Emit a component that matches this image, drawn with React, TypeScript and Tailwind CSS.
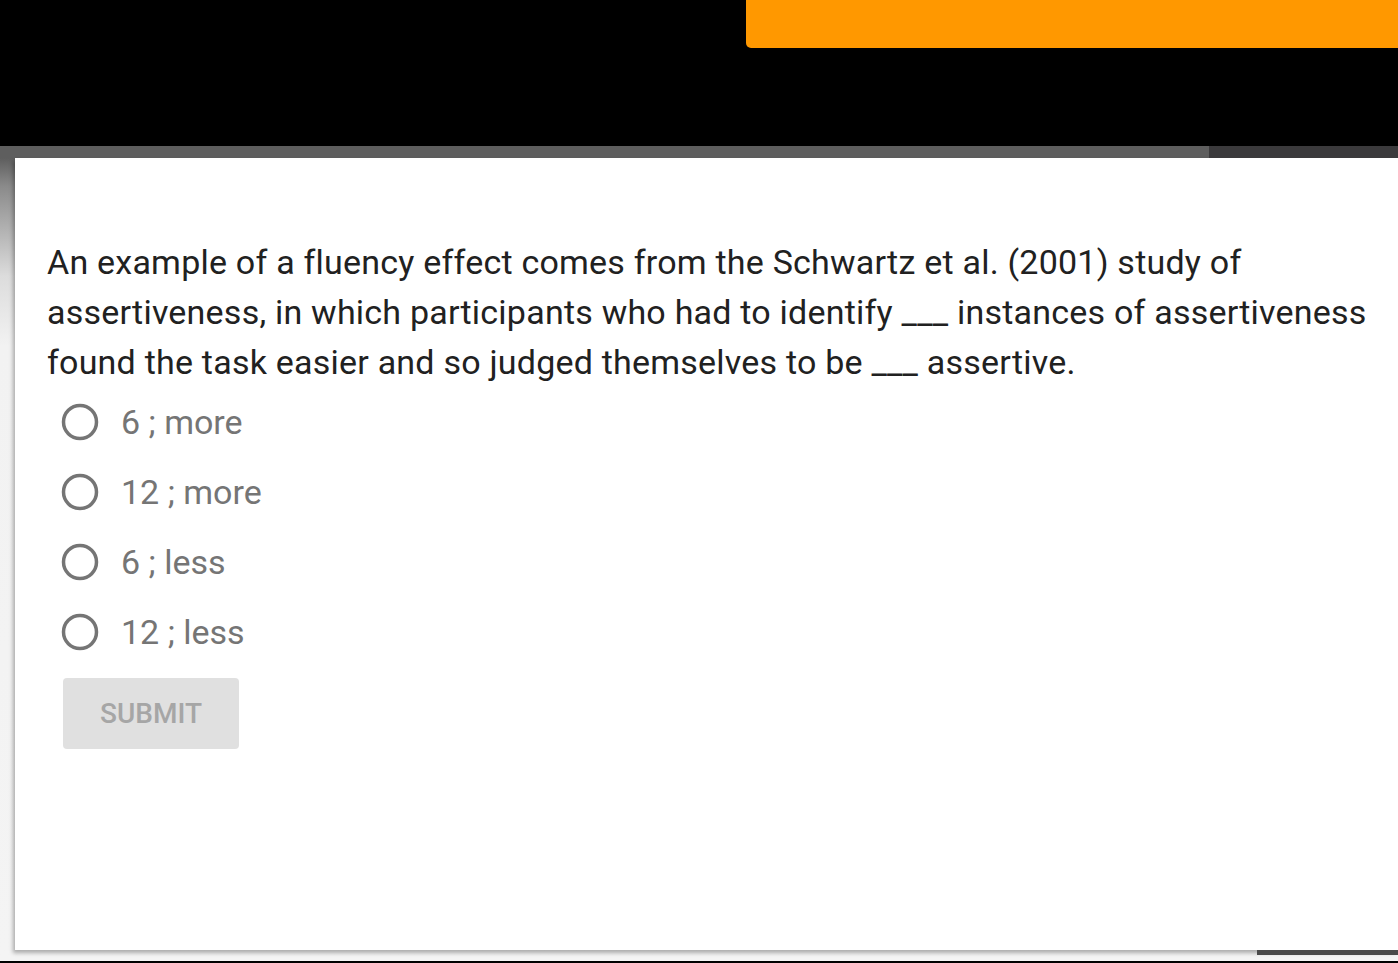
const options = ["6 ; more", "12 ; more", "6 ; less", "12 ; less"];

function Radio() {
  return (
    <svg width="40" height="40" viewBox="0 0 40 40" className="shrink-0">
      <circle cx="20" cy="20" r="16.5" fill="none" stroke="#757575" strokeWidth="3.5" />
    </svg>
  );
}

export default function App() {
  return (
    <div
      className="flex h-[963px] w-[1398px] flex-col overflow-hidden bg-black"
      style={{ fontFamily: "Roboto, 'Liberation Sans', sans-serif" }}
    >
      {/* top bar */}
      <div className="flex h-[146px] shrink-0 justify-end">
        <div className="h-[48px] w-[652px] rounded-bl-[5px] bg-[#ff9800]" />
      </div>

      {/* page */}
      <div className="relative flex h-[815px] shrink-0 flex-col bg-[linear-gradient(to_bottom,#5e5e5e_0px,#5e5e5e_12px,#8a8a8a_40px,#dcdcdc_130px,#f2f2f2_200px,#f4f4f4_100%)]">
        <div className="absolute right-0 top-0 h-[12px] w-[189px] bg-[#3b3a3c]" />
        <div className="absolute bottom-[6px] right-0 h-[5px] w-[141px] bg-[#4a4a4a]" />

        <div className="ml-[15px] mt-[12px] h-[792px] bg-white pl-[32px] pt-[79px] shadow-[-2px_3px_4px_rgba(0,0,0,0.3)]">
          <p className="whitespace-nowrap text-[34px] leading-[50px] tracking-[0.22px] text-[#212121]">
            An example of a fluency effect comes from the Schwartz et al. (2001) study of
            <br />
            assertiveness, in which participants who had to identify ___ instances of assertiveness
            <br />
            found the task easier and so judged themselves to be ___ assertive.
          </p>

          <div className="flex flex-col">
            {options.map((o) => (
              <label key={o} className="flex h-[70px] items-center gap-[21px] pl-[13px]">
                <Radio />
                <span className="text-[34px] text-[#757575]">{o}</span>
              </label>
            ))}
          </div>

          <button
            disabled
            className="ml-[16px] mt-[11px] flex h-[71px] w-[176px] items-center justify-center rounded-[4px] bg-[#e0e0e0] text-[28px] font-medium text-[#a6a6a6]"
          >
            SUBMIT
          </button>
        </div>
      </div>
    </div>
  );
}
